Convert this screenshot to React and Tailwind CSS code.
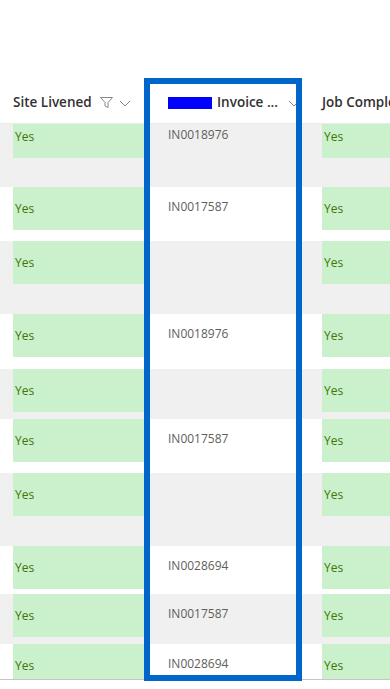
const rows = [
  { h: 'h-[72px]', bg: 'bg-[#f0f0f0]', invoice: 'IN0018976' },
  { h: 'h-[54px]', bg: 'bg-white', invoice: 'IN0017587' },
  { h: 'h-[73px]', bg: 'bg-[#f0f0f0]', invoice: '' },
  { h: 'h-[55px]', bg: 'bg-white', invoice: 'IN0018976' },
  { h: 'h-[50px]', bg: 'bg-[#f0f0f0]', invoice: '' },
  { h: 'h-[54px]', bg: 'bg-white', invoice: 'IN0017587' },
  { h: 'h-[73px]', bg: 'bg-[#f0f0f0]', invoice: '' },
  { h: 'h-[48px]', bg: 'bg-white', invoice: 'IN0028694' },
  { h: 'h-[50px]', bg: 'bg-[#f0f0f0]', invoice: 'IN0017587' },
  { h: 'h-[50px]', bg: 'bg-white', invoice: 'IN0028694' },
];

function YesCell({ wide }) {
  return (
    <div className={`h-[43px] bg-[#caf0cc] flex items-center pl-[2px] pt-[1px] text-[12px] text-[#437406] ${wide ? 'w-full' : 'w-[137px]'}`}>
      Yes
    </div>
  );
}

function FilterIcon() {
  return (
    <svg width="13" height="13" viewBox="0 0 13 13" fill="none" stroke="#8a8886" strokeWidth="1">
      <path d="M0.5 1.5h12l-4.5 5v5l-3-1.5v-3.5z" strokeLinejoin="round" />
    </svg>
  );
}

function Chevron() {
  return (
    <svg width="12" height="12" viewBox="0 0 12 12" fill="none" stroke="#8a8886" strokeWidth="1">
      <path d="M1 4l5 5 5-5" />
    </svg>
  );
}

export default function App() {
  return (
    <div className="relative w-[390px] h-[689px] bg-white overflow-hidden" style={{ fontFamily: '"Open Sans", "Noto Sans", sans-serif' }}>
      <div className="h-[82px]" />

      {/* Header */}
      <div className="h-[42px] flex items-center pl-[13px] border-b border-[#edebe9] text-[13.5px] font-semibold text-[#323130] whitespace-nowrap">
        <div className="w-[147px] shrink-0 flex items-center">
          <span>Site Livened</span>
          <span className="ml-[8px] flex"><FilterIcon /></span>
          <span className="ml-[6px] flex"><Chevron /></span>
        </div>
        <div className="w-[162px] shrink-0 flex items-center pl-[8px]">
          <span className="w-[44px] h-[12px] bg-[#0000ff]" />
          <span className="ml-[5px]">Invoice ...</span>
          <span className="ml-auto mr-[22px] flex"><Chevron /></span>
        </div>
        <div className="shrink-0">Job Completed</div>
      </div>

      {/* Body */}
      <div className="h-[556px] overflow-hidden border-b border-[#c8c6c4]">
        <div className="-mt-[9px]">
          {rows.map((r, i) => (
            <div key={i} className={`flex pl-[13px] ${r.h} ${r.bg}`}>
              <div className="w-[147px] shrink-0">
                <YesCell />
              </div>
              <div className="w-[162px] shrink-0 pl-[8px] pt-[12px] text-[12px] leading-[16px] text-[#605e5c]">
                {r.invoice}
              </div>
              <div className="flex-1">
                <YesCell wide />
              </div>
            </div>
          ))}
        </div>
      </div>

      {/* Highlight box over the Invoice column */}
      <div className="absolute left-[144px] top-[78px] w-[158px] h-[603px] border-[6px] border-[#0066cc]" />
    </div>
  );
}
